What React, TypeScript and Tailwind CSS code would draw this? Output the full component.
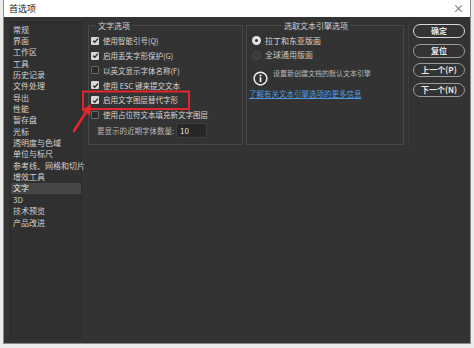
import { useState } from 'react';

const sections = [
    '常规',
    '界面',
    '工作区',
    '工具',
    '历史记录',
    '文件处理',
    '导出',
    '性能',
    '暂存盘',
    '光标',
    '透明度与色域',
    '单位与标尺',
    '参考线、网格和切片',
    '增效工具',
    '文字',
    '3D',
    '技术预览',
    '产品改进',
];

const textOptions = [
    { label: '使用智能引号(Q)', checked: true },
    { label: '启用丢失字形保护(G)', checked: true },
    { label: '以英文显示字体名称(F)', checked: false },
    { label: '使用 ESC 键来提交文本', checked: true },
    { label: '启用文字图层替代字形', checked: true },
    { label: '使用占位符文本填充新文字图层', checked: false },
];

function Checkbox({ checked }: { checked: boolean }) {
    if (!checked) {
        return (
            <span className="h-[8px] w-[8px] shrink-0 rounded-[1px] border border-[#6a6a6a] bg-[#2a2a2a]" />
        );
    }
    return (
        <span className="flex h-[8px] w-[8px] shrink-0 items-center justify-center rounded-[1px] bg-[#d6d6d6]">
            <svg width="7" height="7" viewBox="0 0 8 8">
                <path
                    d="M1.3 4.2 L3.2 6 L6.8 1.9"
                    fill="none"
                    stroke="#2b2b2b"
                    strokeWidth="1.5"
                />
            </svg>
        </span>
    );
}

function Radio({ selected }: { selected: boolean }) {
    return selected ? (
        <span className="flex h-[9px] w-[9px] shrink-0 items-center justify-center rounded-full bg-[#e2e2e2]">
            <span className="h-[3px] w-[3px] rounded-full bg-[#333]" />
        </span>
    ) : (
        <span className="h-[9px] w-[9px] shrink-0 rounded-full border border-[#4a4a4a] bg-[#3a3a3a]" />
    );
}

export default function App() {
    const [active, setActive] = useState('文字');
    const [recent, setRecent] = useState('10');

    return (
        <div className="relative h-[348px] w-[474px] overflow-hidden bg-[#ececec] font-['Noto_Sans_CJK_SC',sans-serif]">
            <div className="ml-[3px] flex h-[344px] w-[468px] flex-col border-x border-b border-[#8a8a8a]">
                {/* title bar */}
                <div className="flex h-[17px] items-center justify-between bg-white pl-[5px] pr-[6px]">
                    <span className="text-[9px] leading-none text-[#222]">首选项</span>
                    <span className="text-[11px] leading-none text-[#555]">×</span>
                </div>

                <div className="flex flex-1 bg-[#333333] pl-[6px] pt-[5px]">
                    {/* sidebar */}
                    <div className="h-[316px] w-[72px] border border-[#2a2a2a] bg-[#303030] pt-[1px]">
                        {sections.map((s) => (
                            <div
                                key={s}
                                onClick={() => setActive(s)}
                                className={`flex h-[11.35px] items-center pl-[2px] text-[8px] leading-none whitespace-nowrap ${
                                    active === s
                                        ? 'bg-[#474747] text-[#e8e8e8]'
                                        : 'text-[#d2d2d2]'
                                }`}
                            >
                                {s}
                            </div>
                        ))}
                    </div>

                    {/* text options */}
                    <fieldset className="ml-[6px] -mt-[2px] h-[125px] w-[155px] border border-[#474747]">
                        <legend className="ml-[7px] px-[2px] text-[8px] leading-[11px] text-[#d0d0d0]">
                            文字选项
                        </legend>
                        <div className="flex flex-col pl-[2px] pt-[2.5px]">
                            {textOptions.map((o) => (
                                <div
                                    key={o.label}
                                    className="flex h-[14.8px] items-center gap-[4px]"
                                >
                                    <Checkbox checked={o.checked} />
                                    <span className="text-[7.5px] leading-none whitespace-nowrap text-[#d4d4d4]">
                                        {o.label}
                                    </span>
                                </div>
                            ))}
                            <div className="mt-[1px] flex items-center gap-[2px] pl-[6px]">
                                <span className="text-[7.5px] leading-none whitespace-nowrap text-[#b8b8b8]">
                                    要显示的近期字体数量:
                                </span>
                                <input
                                    value={recent}
                                    onChange={(e) => setRecent(e.target.value)}
                                    className="h-[15px] w-[31px] border border-[#3e3e3e] bg-[#272727] px-[3px] text-[8px] text-[#e0e0e0] outline-none"
                                />
                            </div>
                        </div>
                    </fieldset>

                    {/* text engine options */}
                    <fieldset className="ml-[3px] -mt-[2px] h-[125px] w-[158px] border border-[#474747]">
                        <legend className="ml-[35px] px-[2px] text-[8px] leading-[11px] text-[#d0d0d0]">
                            选取文本引擎选项
                        </legend>
                        <div className="flex flex-col pl-[5px] pt-[2.5px]">
                            <div className="flex h-[14.5px] items-center gap-[4px]">
                                <Radio selected />
                                <span className="text-[8px] leading-none text-[#d8d8d8]">
                                    拉丁和东亚版面
                                </span>
                            </div>
                            <div className="flex h-[14.5px] items-center gap-[4px]">
                                <Radio selected={false} />
                                <span className="text-[8px] leading-none text-[#c8c8c8]">
                                    全球通用版面
                                </span>
                            </div>
                            <div className="mt-[7px] flex items-start gap-[5px] pl-[1px]">
                                <svg width="15" height="15" viewBox="0 0 16 16" className="mt-[1px] shrink-0">
                                    <circle cx="8" cy="8" r="6.8" fill="none" stroke="#f0f0f0" strokeWidth="1.6" />
                                    <circle cx="8" cy="4.7" r="1.1" fill="#f0f0f0" />
                                    <rect x="7.1" y="6.6" width="1.8" height="5.2" fill="#f0f0f0" />
                                </svg>
                                <span className="text-[7px] leading-none text-[#b8b8b8] whitespace-nowrap">
                                    设置新创建文档的默认文本引擎
                                </span>
                            </div>
                            <a className="mt-[4px] -ml-[3px] text-[7.5px] leading-none text-[#4d9be6] underline whitespace-nowrap">
                                了解有关文本引擎选项的更多信息
                            </a>
                        </div>
                    </fieldset>

                    {/* buttons */}
                    <div className="ml-[4px] h-[125px] w-[1px] bg-[#3d3d3d]" />
                    <div className="ml-[4px] flex flex-col gap-[5.5px] pt-[2px]">
                        {['确定', '复位', '上一个(P)', '下一个(N)'].map((b, i) => (
                            <button
                                key={b}
                                className={`flex h-[14px] w-[52px] items-center justify-center rounded-full text-[8px] leading-none font-bold text-[#e6e6e6] ${
                                    i === 0
                                        ? 'border-[1.5px] border-[#d8d8d8]'
                                        : 'border border-[#9a9a9a]'
                                }`}
                            >
                                {b}
                            </button>
                        ))}
                    </div>
                </div>
            </div>

            {/* red annotation */}
            <svg
                className="pointer-events-none absolute left-0 top-0"
                width="474"
                height="348"
                viewBox="0 0 474 348"
            >
                <rect x="83" y="91.5" width="106" height="17.5" fill="none" stroke="#e3262b" strokeWidth="2" />
                <line x1="74" y1="131" x2="86" y2="112" stroke="#e3262b" strokeWidth="2.6" strokeLinecap="round" />
                <polygon points="91,104 90,115.5 81.5,110" fill="#e3262b" />
            </svg>
        </div>
    );
}
